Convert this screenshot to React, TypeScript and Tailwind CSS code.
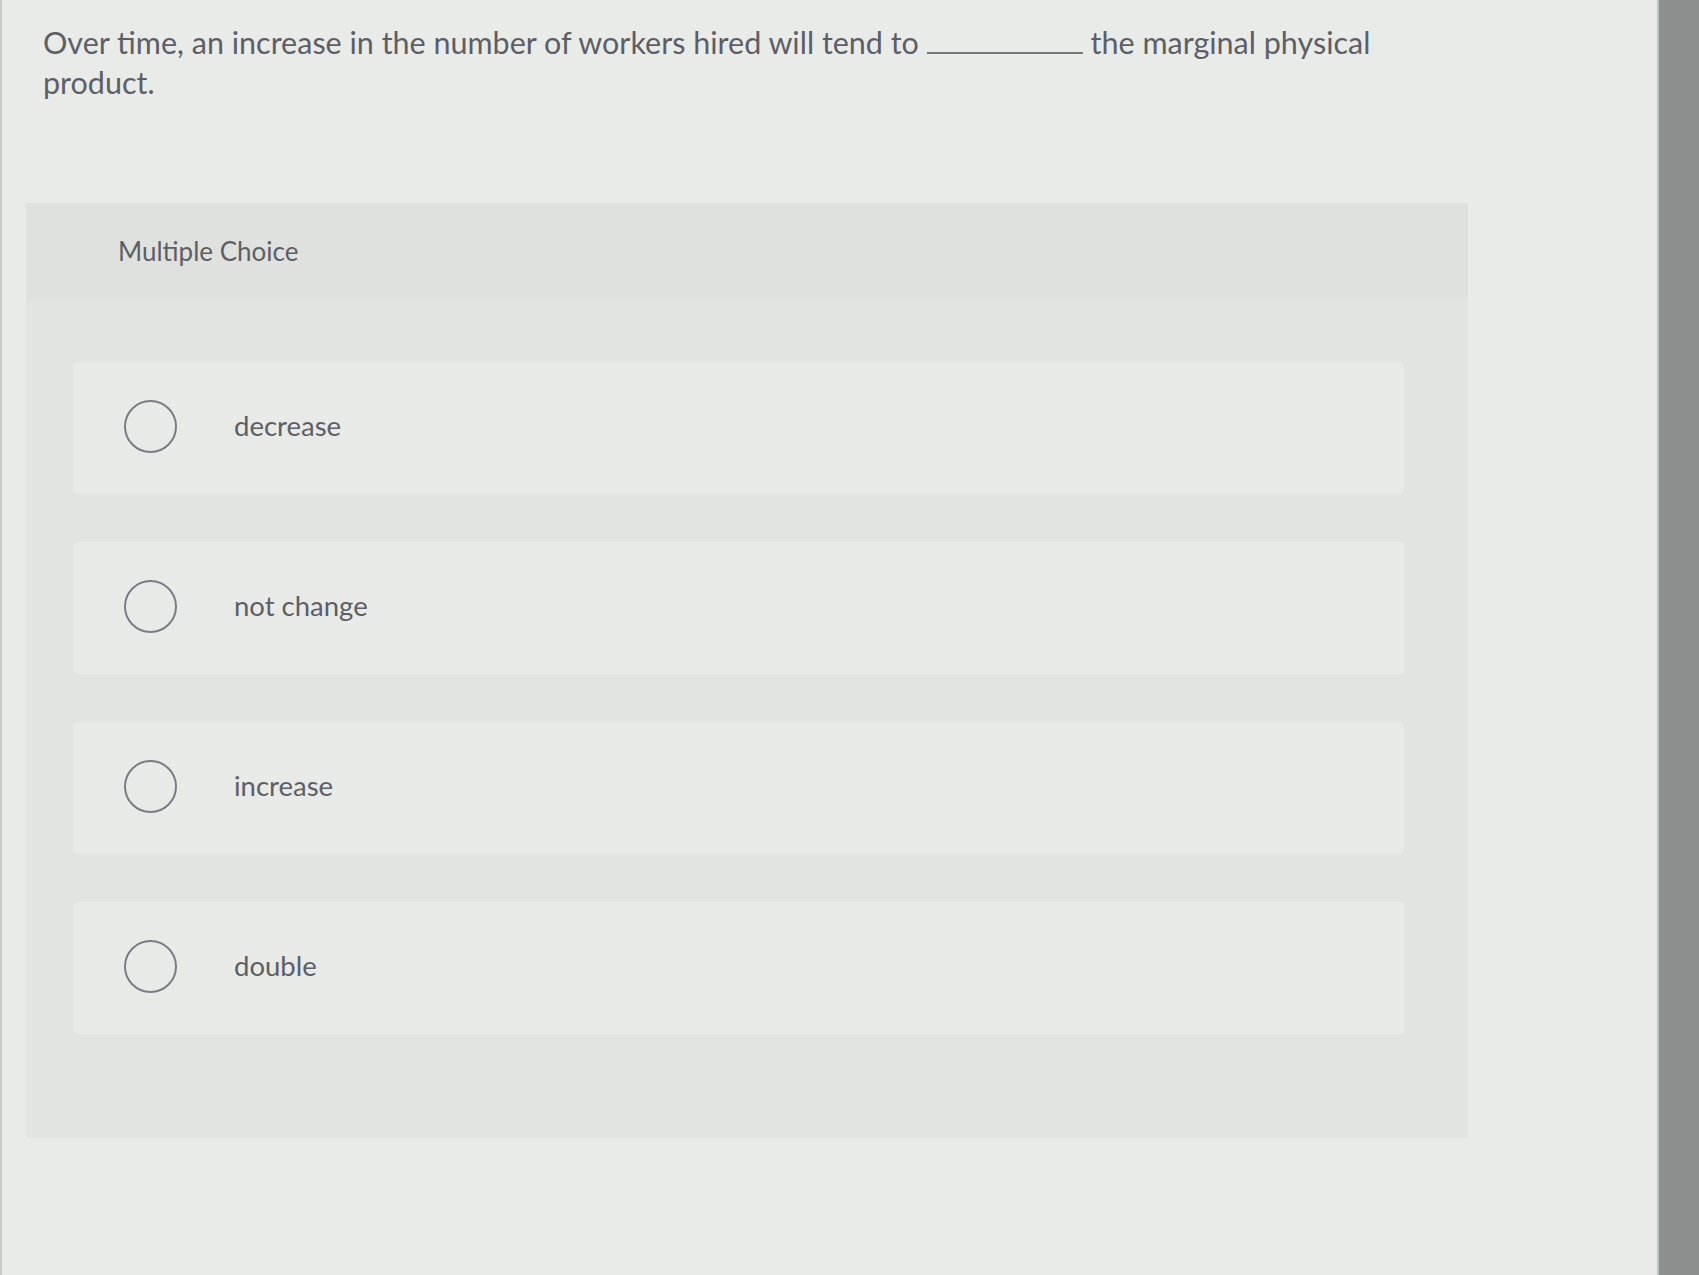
import React from "react";

const options = ["decrease", "not change", "increase", "double"];

const Radio = () => (
  <span className="block h-[53px] w-[53px] shrink-0 rounded-full border-2 border-[#7c7b84]" />
);

const App = () => {
  return (
    <div
      className="flex h-[1275px] w-full bg-[#e9ebe9] text-[#5e5e66]"
      style={{ fontFamily: '"Lato", "Open Sans", sans-serif' }}
    >
      <div className="flex-1 border-l-2 border-[#c9cbc9]">
        <p className="pl-[41px] pt-[22px] text-[30.5px] leading-[40px]">
          <span>Over time, an increase in the number of workers hired will tend to</span>{" "}
          <span className="inline-block w-[156px] border-b-2 border-[#77777e] align-baseline" />{" "}
          <span>the marginal physical</span>
          <br />
          <span>product.</span>
        </p>

        <div className="ml-[24px] mt-[101px] w-[1442px] bg-[#e2e4e2] pb-[104px]">
          <div className="flex h-[97px] items-center bg-[#dfe1df] pl-[92px] text-[26px]">
            Multiple Choice
          </div>
          <div className="flex flex-col gap-[48px] pl-[48px] pr-[64px] pt-[62px]">
            {options.map((o) => (
              <div
                key={o}
                className="flex h-[132px] items-center rounded-[3px] bg-[#e8eae8] pb-[4px] pl-[50px]"
              >
                <Radio />
                <span className="ml-[57px] text-[27.5px]">{o}</span>
              </div>
            ))}
          </div>
        </div>
      </div>
      <div className="w-[42px] border-l-2 border-[#b9c3c8] bg-[#8b8f8e]" />
    </div>
  );
};

export default App;
